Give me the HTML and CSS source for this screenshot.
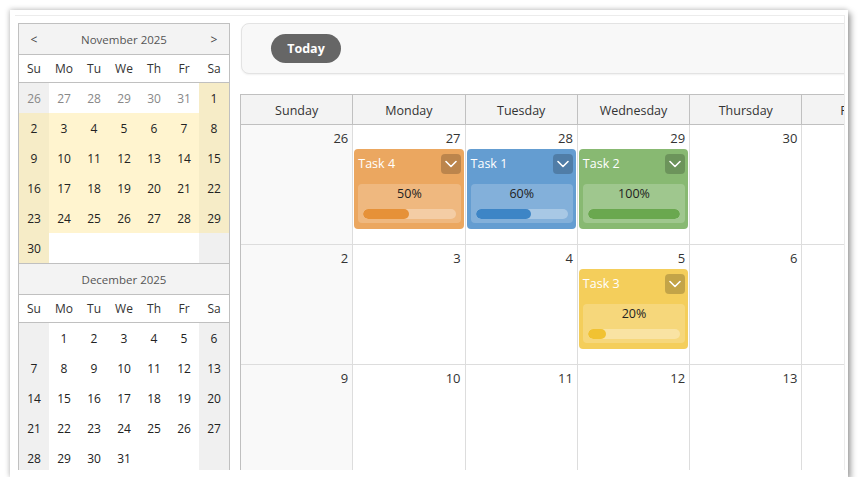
FILE: index.html
```html
<!DOCTYPE html>
<html lang="en">
<head>
<meta charset="utf-8">
<title>Calendar</title>
<link rel="stylesheet" href="styles.css">
</head>
<body>
<div class="window">
  <div class="frame">
    <div class="nav">
      <div class="month">
        <div class="m-title"><span class="arrow">&lt;</span><span class="m-name">November 2025</span><span class="arrow">&gt;</span></div>
        <div class="m-dow"><span>Su</span><span>Mo</span><span>Tu</span><span>We</span><span>Th</span><span>Fr</span><span>Sa</span></div>
        <div class="m-days">
          <span class="we other">26</span><span class="other">27</span><span class="other">28</span><span class="other">29</span><span class="other">30</span><span class="other">31</span><span class="we sel">1</span>
          <span class="we sel">2</span><span class="sel">3</span><span class="sel">4</span><span class="sel">5</span><span class="sel">6</span><span class="sel">7</span><span class="we sel">8</span>
          <span class="we sel">9</span><span class="sel">10</span><span class="sel">11</span><span class="sel">12</span><span class="sel">13</span><span class="sel">14</span><span class="we sel">15</span>
          <span class="we sel">16</span><span class="sel">17</span><span class="sel">18</span><span class="sel">19</span><span class="sel">20</span><span class="sel">21</span><span class="we sel">22</span>
          <span class="we sel">23</span><span class="sel">24</span><span class="sel">25</span><span class="sel">26</span><span class="sel">27</span><span class="sel">28</span><span class="we sel">29</span>
          <span class="we sel">30</span><span></span><span></span><span></span><span></span><span></span><span class="we"></span>
        </div>
      </div>
      <div class="month">
        <div class="m-title"><span class="arrow"></span><span class="m-name">December 2025</span><span class="arrow"></span></div>
        <div class="m-dow"><span>Su</span><span>Mo</span><span>Tu</span><span>We</span><span>Th</span><span>Fr</span><span>Sa</span></div>
        <div class="m-days">
          <span class="we"></span><span>1</span><span>2</span><span>3</span><span>4</span><span>5</span><span class="we">6</span>
          <span class="we">7</span><span>8</span><span>9</span><span>10</span><span>11</span><span>12</span><span class="we">13</span>
          <span class="we">14</span><span>15</span><span>16</span><span>17</span><span>18</span><span>19</span><span class="we">20</span>
          <span class="we">21</span><span>22</span><span>23</span><span>24</span><span>25</span><span>26</span><span class="we">27</span>
          <span class="we">28</span><span>29</span><span>30</span><span>31</span><span></span><span></span><span class="we"></span>
          <span class="we"></span><span></span><span></span><span></span><span></span><span></span><span class="we"></span>
        </div>
      </div>
    </div>

    <div class="main">
      <div class="toolbar">
        <button class="today">Today</button>
      </div>
      <div class="cal">
        <div class="hcell">Sunday</div><div class="hcell">Monday</div><div class="hcell">Tuesday</div><div class="hcell">Wednesday</div><div class="hcell">Thursday</div><div class="hcell">Friday</div><div class="hcell">Saturday</div>

        <div class="cell we"><div class="num">26</div></div>
        <div class="cell"><div class="num">27</div>
          <div class="ev orange">
            <div class="ev-head"><span class="ev-title">Task 4</span><span class="ev-btn"><svg width="12" height="8" viewBox="0 0 12 8"><path d="M1 1.5 L6 6.5 L11 1.5" fill="none" stroke="#fff" stroke-width="1.6" stroke-linecap="round" stroke-linejoin="round"/></svg></span></div>
            <div class="ev-prog"><div class="ev-pct">50%</div><div class="bar"><div class="fill" style="width:50%"></div></div></div>
          </div>
        </div>
        <div class="cell"><div class="num">28</div>
          <div class="ev blue">
            <div class="ev-head"><span class="ev-title">Task 1</span><span class="ev-btn"><svg width="12" height="8" viewBox="0 0 12 8"><path d="M1 1.5 L6 6.5 L11 1.5" fill="none" stroke="#fff" stroke-width="1.6" stroke-linecap="round" stroke-linejoin="round"/></svg></span></div>
            <div class="ev-prog"><div class="ev-pct">60%</div><div class="bar"><div class="fill" style="width:60%"></div></div></div>
          </div>
        </div>
        <div class="cell"><div class="num">29</div>
          <div class="ev green">
            <div class="ev-head"><span class="ev-title">Task 2</span><span class="ev-btn"><svg width="12" height="8" viewBox="0 0 12 8"><path d="M1 1.5 L6 6.5 L11 1.5" fill="none" stroke="#fff" stroke-width="1.6" stroke-linecap="round" stroke-linejoin="round"/></svg></span></div>
            <div class="ev-prog"><div class="ev-pct">100%</div><div class="bar"><div class="fill" style="width:100%"></div></div></div>
          </div>
        </div>
        <div class="cell"><div class="num">30</div></div>
        <div class="cell"><div class="num">31</div></div>
        <div class="cell we"><div class="num">1</div></div>

        <div class="cell we"><div class="num">2</div></div>
        <div class="cell"><div class="num">3</div></div>
        <div class="cell"><div class="num">4</div></div>
        <div class="cell"><div class="num">5</div>
          <div class="ev yellow">
            <div class="ev-head"><span class="ev-title">Task 3</span><span class="ev-btn"><svg width="12" height="8" viewBox="0 0 12 8"><path d="M1 1.5 L6 6.5 L11 1.5" fill="none" stroke="#fff" stroke-width="1.6" stroke-linecap="round" stroke-linejoin="round"/></svg></span></div>
            <div class="ev-prog"><div class="ev-pct">20%</div><div class="bar"><div class="fill" style="width:20%"></div></div></div>
          </div>
        </div>
        <div class="cell"><div class="num">6</div></div>
        <div class="cell"><div class="num">7</div></div>
        <div class="cell we"><div class="num">8</div></div>

        <div class="cell we"><div class="num">9</div></div>
        <div class="cell"><div class="num">10</div></div>
        <div class="cell"><div class="num">11</div></div>
        <div class="cell"><div class="num">12</div></div>
        <div class="cell"><div class="num">13</div></div>
        <div class="cell"><div class="num">14</div></div>
        <div class="cell we"><div class="num">15</div></div>
      </div>
    </div>
  </div>
</div>
</body>
</html>
```

FILE: styles.css
```css
* { box-sizing: border-box; }

body {
  margin: 0;
  background: #ffffff;
  font-family: "Open Sans", "Noto Sans", "DejaVu Sans", sans-serif;
  color: #333;
}

.window {
  margin: 10px 0 0 10px;
  width: 838px;
  height: 467px;
  background: #fff;
  padding: 5px 3px 7px 5px;
  box-shadow: 3px 3px 6px rgba(0, 0, 0, 0.35), -1px -1px 5px rgba(0, 0, 0, 0.18);
}

.frame {
  width: 100%;
  height: 100%;
  overflow: hidden;
  border-top: 1px solid #ececec;
  border-right: 1px solid #ececec;
  padding: 7px 0 0 3px;
  display: flex;
  align-items: flex-start;
  gap: 10px;
}

/* ---------- navigator ---------- */
.nav {
  flex: 0 0 212px;
  border-left: 1px solid #c0c0c0;
  border-right: 1px solid #c0c0c0;
  font-size: 12px;
}

.month {
  border-top: 1px solid #c0c0c0;
}

.m-title {
  display: grid;
  grid-template-columns: 30px 1fr 30px;
  height: 31px;
  line-height: 32px;
  background: #f3f3f3;
  border-bottom: 1px solid #c0c0c0;
  color: #555;
  text-align: center;
}

.m-name { font-size: 11.5px; }
.arrow { font-size: 12px; color: #444; }

.m-dow {
  display: grid;
  grid-template-columns: repeat(7, 30px);
  height: 28px;
  line-height: 28px;
  border-bottom: 1px solid #c0c0c0;
  text-align: center;
  color: #333;
  background: #fff;
}

.m-days {
  display: grid;
  grid-template-columns: repeat(7, 30px);
  grid-auto-rows: 30px;
  text-align: center;
  line-height: 31px;
  color: #222;
}

.m-days span { background: #fff; }
.m-days span.we { background: #f0f0f0; }
.m-days span.other { color: #888; }
.m-days span.sel { background: #fff4cf; }
.m-days span.we.sel { background: #f6ecc7; }

/* ---------- main ---------- */
.main {
  flex: 0 0 787px;
}

.toolbar {
  margin-left: 1px;
  height: 51px;
  background: #f8f8f8;
  border: 1px solid #e3e3e3;
  border-radius: 8px;
  box-shadow: 0 1px 2px rgba(0, 0, 0, 0.06);
  display: flex;
  align-items: center;
  padding-left: 29px;
}

.today {
  width: 70px;
  height: 29px;
  border: none;
  border-radius: 15px;
  background: #666666;
  color: #fff;
  font-family: inherit;
  font-size: 12.5px;
  font-weight: 700;
  padding: 0;
}

.cal {
  margin-top: 20px;
  display: grid;
  grid-template-columns: repeat(7, 1fr);
  border-top: 1px solid #c0c0c0;
  border-left: 1px solid #c0c0c0;
}

.hcell {
  height: 30px;
  line-height: 31px;
  text-align: center;
  font-size: 12.5px;
  background: #f3f3f3;
  border-right: 1px solid #c0c0c0;
  border-bottom: 1px solid #c0c0c0;
  color: #333;
}

.cell {
  height: 120px;
  border-right: 1px solid #dddddd;
  border-bottom: 1px solid #dddddd;
  background: #fff;
  padding: 0 1px 0 1px;
}

.cell.we { background: #f9f9f9; }

.num {
  height: 24px;
  padding: 4px 3px 0 0;
  line-height: 19px;
  text-align: right;
  font-size: 13px;
  color: #333;
}

/* ---------- events ---------- */
.ev {
  height: 80px;
  border-radius: 4px;
  padding: 4px 3px 6px 4px;
  display: flex;
  flex-direction: column;
}

.ev.orange { background: rgba(230, 145, 56, 0.8); }
.ev.blue   { background: rgba(61, 133, 198, 0.8); }
.ev.green  { background: rgba(106, 168, 79, 0.8); }
.ev.yellow { background: rgba(241, 194, 50, 0.8); }

.ev.orange .fill { background: #e69138; }
.ev.blue .fill   { background: #3d85c6; }
.ev.green .fill  { background: #6aa84f; }
.ev.yellow .fill { background: #f1c232; }

.ev-head {
  height: 22px;
  display: flex;
  align-items: center;
  justify-content: space-between;
}

.ev-title {
  color: #fff;
  font-size: 12.5px;
  line-height: 18px;
}

.ev-btn {
  width: 20px;
  height: 20px;
  border-radius: 4px;
  background: rgba(0, 0, 0, 0.2);
  display: flex;
  align-items: center;
  justify-content: center;
}

.ev-btn svg { display: block; }

.ev-prog {
  margin-top: 9px;
  height: 39px;
  border-radius: 4px;
  background: rgba(255, 255, 255, 0.2);
  padding: 1px 5px 4px 5px;
}

.ev-pct {
  text-align: center;
  font-size: 12.5px;
  line-height: 18px;
  color: #222;
}

.bar {
  margin-top: 6px;
  height: 10px;
  border-radius: 5px;
  background: rgba(255, 255, 255, 0.3);
  overflow: hidden;
}

.fill {
  height: 100%;
  border-radius: 5px;
}
```
